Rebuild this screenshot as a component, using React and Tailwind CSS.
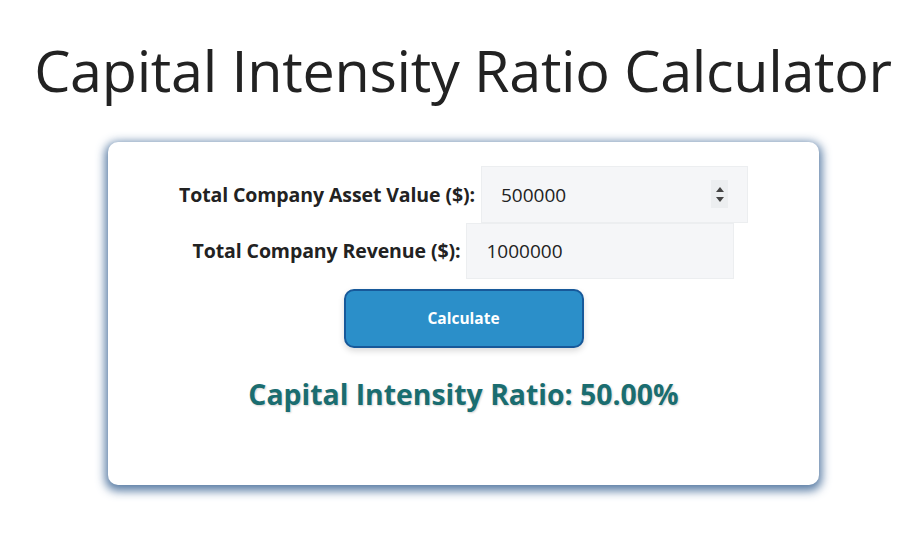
import React, { useState } from 'react'

const App = () => {

  const [assets, setAssets] = useState('500000');
  const [revenue, setRevenue] = useState('1000000');
  const [ratio, setRatio] = useState('50.00');

  const calculate = () => {
    const a = parseFloat(assets);
    const r = parseFloat(revenue);
    if (r) setRatio(((a / r) * 100).toFixed(2));
  }

  const step = (delta) => {
    setAssets(String((parseFloat(assets) || 0) + delta));
  }

  return (
    <div className="min-h-screen bg-white font-['Open_Sans',sans-serif] text-[#222]">
      <h1 className="pt-[30px] pl-[6px] text-center text-[57.5px] leading-[80px] font-normal text-[#222] tracking-[-0.3px]">
        Capital Intensity Ratio Calculator
      </h1>

      <div className="ml-[108px] mt-[32px] w-[711px] h-[343px] rounded-[10px] bg-white shadow-[0_3px_10px_3px_rgba(65,105,150,0.85)] pt-[24px]">

        <div className="flex justify-center items-center">
          <label className="text-[19.5px] font-bold mr-[6px] tracking-[-0.1px]">Total Company Asset Value ($):</label>
          <div className="relative">
            <input
              type="text"
              value={assets}
              onChange={(e)=> setAssets(e.target.value)}
              className="w-[267px] h-[57px] bg-[#f5f6f8] border border-[#eceef0] pl-[19px] text-[19px] text-[#222] outline-none"
            />
            <div className="absolute right-[20px] top-[14px] w-[17px] h-[28px] bg-[#eceef0] flex flex-col items-center justify-center gap-[5px]">
              <button onClick={()=> step(1)} className="block">
                <svg width="8" height="5" viewBox="0 0 8 5"><path d="M0 5 L4 0 L8 5 Z" fill="#444" /></svg>
              </button>
              <button onClick={()=> step(-1)} className="block">
                <svg width="8" height="5" viewBox="0 0 8 5"><path d="M0 0 L4 5 L8 0 Z" fill="#444" /></svg>
              </button>
            </div>
          </div>
        </div>

        <div className="flex justify-center items-center">
          <label className="text-[19.5px] font-bold mr-[6px] tracking-[-0.1px]">Total Company Revenue ($):</label>
          <input
            type="text"
            value={revenue}
            onChange={(e)=> setRevenue(e.target.value)}
            className="w-[268px] h-[56px] bg-[#f5f6f8] border border-[#eceef0] pl-[19px] text-[19px] text-[#222] outline-none"
          />
        </div>

        <div className="flex justify-center mt-[10px]">
          <button
            onClick={calculate}
            className="w-[240px] h-[59px] rounded-[10px] bg-[#2b8fc9] border-2 border-[#17599a] text-white text-[15.5px] font-bold shadow-[0_3px_6px_rgba(0,0,0,0.15)]"
          >
            Calculate
          </button>
        </div>

        <p className="mt-[25px] text-center text-[28.4px] font-bold text-[#1a6d70] [text-shadow:1px_1px_2px_rgba(0,0,0,0.18)]">
          Capital Intensity Ratio: {ratio}%
        </p>

      </div>
    </div>
  )
}

export default App
